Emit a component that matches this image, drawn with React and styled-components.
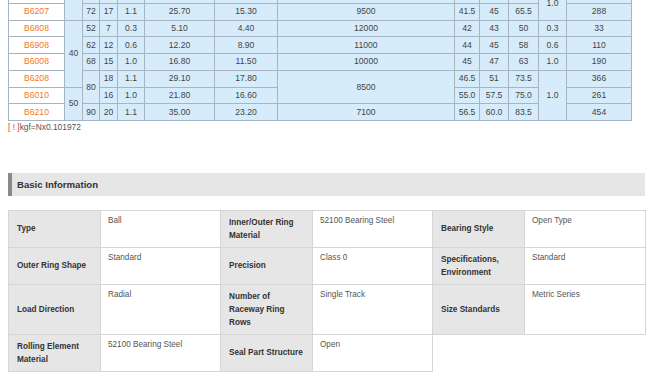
import styled, { createGlobalStyle } from 'styled-components';

const GlobalStyle = createGlobalStyle`
  body {
    margin: 0;
    font-family: "Liberation Sans", Arial, sans-serif;
    background: #fff;
  }
`;

const Page = styled.main`
  padding: 0 5px 0 8px;
`;

// the page is scrolled: the rows above B6207 sit above the window
const SpecTable = styled.table`
  border-collapse: collapse;
  table-layout: fixed;
  width: 624px;
  margin-top: -47px;
  font-size: 8.6px;
  color: #444;

  tr {
    height: 16.7px;
  }
`;

const Cell = styled.td`
  border: 1px solid #a6b5c1;
  background: #d6ecfb;
  text-align: center;
  padding: 0;
  line-height: 11px;
`;

const ModelCell = styled(Cell)`
  background: #fff;
  color: #f5761f;
`;

const Note = styled.p`
  margin: 1px 0 0;
  font-size: 8.4px;
  line-height: 11px;
  color: #555;
`;

const Warn = styled.span`
  color: #d6461f;
`;

const SectionHead = styled.h2`
  margin: 40px 0 0;
  height: 23px;
  display: flex;
  align-items: center;
  padding-left: 5px;
  border-left: 4px solid #8a8a8a;
  background: #e6e6e6;
  font-size: 9.6px;
  font-weight: bold;
  color: #333;
`;

const InfoTable = styled.table`
  border-collapse: collapse;
  table-layout: fixed;
  width: 637px;
  margin-top: 14px;
  font-size: 8.2px;
  line-height: 13px;
`;

const Label = styled.th`
  border: 1px solid #d6d6d6;
  background: #e6e6e6;
  color: #333;
  font-weight: bold;
  text-align: left;
  vertical-align: middle;
  padding: 5px 8px;
`;

const Value = styled.td`
  border: 1px solid #d6d6d6;
  background: #fff;
  color: #555;
  vertical-align: top;
  padding: 3px 7px;
`;

const specCols = [56, 18, 17, 18, 27, 70, 63, 177, 25, 29, 30, 28, 65];

const specRows = [
  ['', [['', 4], '', '', '', '', '', '', '', '', '', '', '']],
  [' ', ['', '', '', '', '', '', '', '', '', '', '']],
  ['  ', ['', '', '', '', '', '', '', '', '', ['1.0', 2], '']],
  ['B6207', ['72', '17', '1.1', '25.70', '15.30', '9500', '41.5', '45', '65.5', '288']],
  ['B6808', [['40', 4], '52', '7', '0.3', '5.10', '4.40', '12000', '42', '43', '50', '0.3', '33']],
  ['B6908', ['62', '12', '0.6', '12.20', '8.90', '11000', '44', '45', '58', '0.6', '110']],
  ['B6008', ['68', '15', '1.0', '16.80', '11.50', '10000', '45', '47', '63', '1.0', '190']],
  ['B6208', [['80', 2], '18', '1.1', '29.10', '17.80', ['8500', 2], '46.5', '51', '73.5', ['1.0', 3], '366']],
  ['B6010', [['50', 2], '16', '1.0', '21.80', '16.60', '55.0', '57.5', '75.0', '261']],
  ['B6210', ['90', '20', '1.1', '35.00', '23.20', '7100', '56.5', '60.0', '83.5', '454']],
];

const infoRows = [
  [['Type', 'Ball'], ['Inner/Outer Ring Material', '52100 Bearing Steel'], ['Bearing Style', 'Open Type']],
  [['Outer Ring Shape', 'Standard'], ['Precision', 'Class 0'], ['Specifications, Environment', 'Standard']],
  [['Load Direction', 'Radial'], ['Number of Raceway Ring Rows', 'Single Track'], ['Size Standards', 'Metric Series']],
  [['Rolling Element Material', '52100 Bearing Steel'], ['Seal Part Structure', 'Open']],
];

const infoCols = [92, 120, 92, 120, 92, 121];

const App = () => {
  return (
    <Page>
      <GlobalStyle />
      <SpecTable>
        <colgroup>
          {specCols.map((w, i) => (
            <col key={i} style={{ width: w }} />
          ))}
        </colgroup>
        <tbody>
          {specRows.map(([model, cells]) => (
            <tr key={model}>
              <ModelCell>{model.trim()}</ModelCell>
              {cells.map((c, i) =>
                Array.isArray(c) ? (
                  <Cell key={i} rowSpan={c[1]}>{c[0]}</Cell>
                ) : (
                  <Cell key={i}>{c}</Cell>
                )
              )}
            </tr>
          ))}
        </tbody>
      </SpecTable>
      <Note>
        <Warn>[ ! ]</Warn>kgf=Nx0.101972
      </Note>

      <SectionHead>Basic Information</SectionHead>
      <InfoTable>
        <colgroup>
          {infoCols.map((w, i) => (
            <col key={i} style={{ width: w }} />
          ))}
        </colgroup>
        <tbody>
          {infoRows.map((row, r) => (
            <tr key={r}>
              {row.map(([label, value]) => [
                <Label key={label}>{label}</Label>,
                <Value key={label + '-v'}>{value}</Value>,
              ])}
            </tr>
          ))}
        </tbody>
      </InfoTable>
    </Page>
  );
};

export default App;
